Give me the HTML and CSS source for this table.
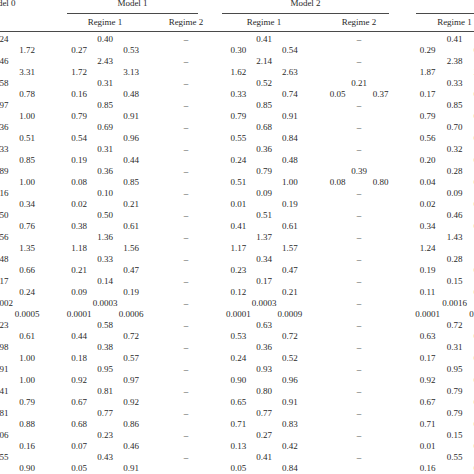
FILE: index.html
```html
<!DOCTYPE html>
<html>
<head>
<meta charset="utf-8">
<link rel="stylesheet" href="styles.css">
</head>
<body>
<div class="table">
  <div class="group g0">
    <div class="ghead nl">Model 0</div>
    <div class="regs">
      <div class="col c0">
        <div class="rhead">&nbsp;</div>
        <div class="body">
          <div class="cell"><span class="m">0.24</span><span class="r">1.72</span></div>
          <div class="cell"><span class="m">2.46</span><span class="r">3.31</span></div>
          <div class="cell"><span class="m">0.58</span><span class="r">0.78</span></div>
          <div class="cell"><span class="m">0.97</span><span class="r">1.00</span></div>
          <div class="cell"><span class="m">0.36</span><span class="r">0.51</span></div>
          <div class="cell"><span class="m">0.33</span><span class="r">0.85</span></div>
          <div class="cell"><span class="m">0.89</span><span class="r">1.00</span></div>
          <div class="cell"><span class="m">0.16</span><span class="r">0.34</span></div>
          <div class="cell"><span class="m">0.50</span><span class="r">0.76</span></div>
          <div class="cell"><span class="m">0.56</span><span class="r">1.35</span></div>
          <div class="cell"><span class="m">0.48</span><span class="r">0.66</span></div>
          <div class="cell"><span class="m">0.17</span><span class="r">0.24</span></div>
          <div class="cell"><span class="m">0.0002</span><span class="r">0.0005</span></div>
          <div class="cell"><span class="m">0.23</span><span class="r">0.61</span></div>
          <div class="cell"><span class="m">0.98</span><span class="r">1.00</span></div>
          <div class="cell"><span class="m">0.91</span><span class="r">1.00</span></div>
          <div class="cell"><span class="m">0.41</span><span class="r">0.79</span></div>
          <div class="cell"><span class="m">0.81</span><span class="r">0.88</span></div>
          <div class="cell"><span class="m">0.06</span><span class="r">0.16</span></div>
          <div class="cell"><span class="m">0.55</span><span class="r">0.90</span></div>
        </div>
      </div>
    </div>
  </div>

  <div class="group g1">
    <div class="ghead">Model 1</div>
    <div class="regs">
      <div class="col c1">
        <div class="rhead">Regime 1</div>
        <div class="body">
          <div class="cell"><span class="m">0.40</span><span class="l">0.27</span><span class="r">0.53</span></div>
          <div class="cell"><span class="m">2.43</span><span class="l">1.72</span><span class="r">3.13</span></div>
          <div class="cell"><span class="m">0.31</span><span class="l">0.16</span><span class="r">0.48</span></div>
          <div class="cell"><span class="m">0.85</span><span class="l">0.79</span><span class="r">0.91</span></div>
          <div class="cell"><span class="m">0.69</span><span class="l">0.54</span><span class="r">0.96</span></div>
          <div class="cell"><span class="m">0.31</span><span class="l">0.19</span><span class="r">0.44</span></div>
          <div class="cell"><span class="m">0.36</span><span class="l">0.08</span><span class="r">0.85</span></div>
          <div class="cell"><span class="m">0.10</span><span class="l">0.02</span><span class="r">0.21</span></div>
          <div class="cell"><span class="m">0.50</span><span class="l">0.38</span><span class="r">0.61</span></div>
          <div class="cell"><span class="m">1.36</span><span class="l">1.18</span><span class="r">1.56</span></div>
          <div class="cell"><span class="m">0.33</span><span class="l">0.21</span><span class="r">0.47</span></div>
          <div class="cell"><span class="m">0.14</span><span class="l">0.09</span><span class="r">0.19</span></div>
          <div class="cell"><span class="m">0.0003</span><span class="l">0.0001</span><span class="r">0.0006</span></div>
          <div class="cell"><span class="m">0.58</span><span class="l">0.44</span><span class="r">0.72</span></div>
          <div class="cell"><span class="m">0.38</span><span class="l">0.18</span><span class="r">0.57</span></div>
          <div class="cell"><span class="m">0.95</span><span class="l">0.92</span><span class="r">0.97</span></div>
          <div class="cell"><span class="m">0.81</span><span class="l">0.67</span><span class="r">0.92</span></div>
          <div class="cell"><span class="m">0.77</span><span class="l">0.68</span><span class="r">0.86</span></div>
          <div class="cell"><span class="m">0.23</span><span class="l">0.07</span><span class="r">0.46</span></div>
          <div class="cell"><span class="m">0.43</span><span class="l">0.05</span><span class="r">0.91</span></div>
        </div>
      </div>
      <div class="col c1b">
        <div class="rhead">Regime 2</div>
        <div class="body">
          <div class="cell"><span class="m">–</span></div>
          <div class="cell"><span class="m">–</span></div>
          <div class="cell"><span class="m">–</span></div>
          <div class="cell"><span class="m">–</span></div>
          <div class="cell"><span class="m">–</span></div>
          <div class="cell"><span class="m">–</span></div>
          <div class="cell"><span class="m">–</span></div>
          <div class="cell"><span class="m">–</span></div>
          <div class="cell"><span class="m">–</span></div>
          <div class="cell"><span class="m">–</span></div>
          <div class="cell"><span class="m">–</span></div>
          <div class="cell"><span class="m">–</span></div>
          <div class="cell"><span class="m">–</span></div>
          <div class="cell"><span class="m">–</span></div>
          <div class="cell"><span class="m">–</span></div>
          <div class="cell"><span class="m">–</span></div>
          <div class="cell"><span class="m">–</span></div>
          <div class="cell"><span class="m">–</span></div>
          <div class="cell"><span class="m">–</span></div>
          <div class="cell"><span class="m">–</span></div>
        </div>
      </div>
    </div>
  </div>

  <div class="group g2">
    <div class="ghead">Model 2</div>
    <div class="regs">
      <div class="col c2">
        <div class="rhead">Regime 1</div>
        <div class="body">
          <div class="cell"><span class="m">0.41</span><span class="l">0.30</span><span class="r">0.54</span></div>
          <div class="cell"><span class="m">2.14</span><span class="l">1.62</span><span class="r">2.63</span></div>
          <div class="cell"><span class="m">0.52</span><span class="l">0.33</span><span class="r">0.74</span></div>
          <div class="cell"><span class="m">0.85</span><span class="l">0.79</span><span class="r">0.91</span></div>
          <div class="cell"><span class="m">0.68</span><span class="l">0.55</span><span class="r">0.84</span></div>
          <div class="cell"><span class="m">0.36</span><span class="l">0.24</span><span class="r">0.48</span></div>
          <div class="cell"><span class="m">0.79</span><span class="l">0.51</span><span class="r">1.00</span></div>
          <div class="cell"><span class="m">0.09</span><span class="l">0.01</span><span class="r">0.19</span></div>
          <div class="cell"><span class="m">0.51</span><span class="l">0.41</span><span class="r">0.61</span></div>
          <div class="cell"><span class="m">1.37</span><span class="l">1.17</span><span class="r">1.57</span></div>
          <div class="cell"><span class="m">0.34</span><span class="l">0.23</span><span class="r">0.47</span></div>
          <div class="cell"><span class="m">0.17</span><span class="l">0.12</span><span class="r">0.21</span></div>
          <div class="cell"><span class="m">0.0003</span><span class="l">0.0001</span><span class="r">0.0009</span></div>
          <div class="cell"><span class="m">0.63</span><span class="l">0.53</span><span class="r">0.72</span></div>
          <div class="cell"><span class="m">0.36</span><span class="l">0.24</span><span class="r">0.52</span></div>
          <div class="cell"><span class="m">0.93</span><span class="l">0.90</span><span class="r">0.96</span></div>
          <div class="cell"><span class="m">0.80</span><span class="l">0.65</span><span class="r">0.91</span></div>
          <div class="cell"><span class="m">0.77</span><span class="l">0.71</span><span class="r">0.83</span></div>
          <div class="cell"><span class="m">0.27</span><span class="l">0.13</span><span class="r">0.42</span></div>
          <div class="cell"><span class="m">0.41</span><span class="l">0.05</span><span class="r">0.84</span></div>
        </div>
      </div>
      <div class="col c2b">
        <div class="rhead">Regime 2</div>
        <div class="body">
          <div class="cell"><span class="m">–</span></div>
          <div class="cell"><span class="m">–</span></div>
          <div class="cell"><span class="m">0.21</span><span class="l">0.05</span><span class="r">0.37</span></div>
          <div class="cell"><span class="m">–</span></div>
          <div class="cell"><span class="m">–</span></div>
          <div class="cell"><span class="m">–</span></div>
          <div class="cell"><span class="m">0.39</span><span class="l">0.08</span><span class="r">0.80</span></div>
          <div class="cell"><span class="m">–</span></div>
          <div class="cell"><span class="m">–</span></div>
          <div class="cell"><span class="m">–</span></div>
          <div class="cell"><span class="m">–</span></div>
          <div class="cell"><span class="m">–</span></div>
          <div class="cell"><span class="m">–</span></div>
          <div class="cell"><span class="m">–</span></div>
          <div class="cell"><span class="m">–</span></div>
          <div class="cell"><span class="m">–</span></div>
          <div class="cell"><span class="m">–</span></div>
          <div class="cell"><span class="m">–</span></div>
          <div class="cell"><span class="m">–</span></div>
          <div class="cell"><span class="m">–</span></div>
        </div>
      </div>
    </div>
  </div>

  <div class="group g3">
    <div class="ghead">Model 3</div>
    <div class="regs">
      <div class="col c3">
        <div class="rhead">Regime 1</div>
        <div class="body">
          <div class="cell"><span class="m">0.41</span><span class="l">0.29</span><span class="r">0.53</span></div>
          <div class="cell"><span class="m">2.38</span><span class="l">1.87</span><span class="r">2.89</span></div>
          <div class="cell"><span class="m">0.33</span><span class="l">0.17</span><span class="r">0.50</span></div>
          <div class="cell"><span class="m">0.85</span><span class="l">0.79</span><span class="r">0.91</span></div>
          <div class="cell"><span class="m">0.70</span><span class="l">0.56</span><span class="r">0.84</span></div>
          <div class="cell"><span class="m">0.32</span><span class="l">0.20</span><span class="r">0.45</span></div>
          <div class="cell"><span class="m">0.28</span><span class="l">0.04</span><span class="r">0.76</span></div>
          <div class="cell"><span class="m">0.09</span><span class="l">0.02</span><span class="r">0.17</span></div>
          <div class="cell"><span class="m">0.46</span><span class="l">0.34</span><span class="r">0.58</span></div>
          <div class="cell"><span class="m">1.43</span><span class="l">1.24</span><span class="r">1.63</span></div>
          <div class="cell"><span class="m">0.28</span><span class="l">0.19</span><span class="r">0.38</span></div>
          <div class="cell"><span class="m">0.15</span><span class="l">0.11</span><span class="r">0.19</span></div>
          <div class="cell"><span class="m">0.0016</span><span class="l">0.0001</span><span class="r">0.0040</span></div>
          <div class="cell"><span class="m">0.72</span><span class="l">0.63</span><span class="r">0.80</span></div>
          <div class="cell"><span class="m">0.31</span><span class="l">0.17</span><span class="r">0.46</span></div>
          <div class="cell"><span class="m">0.95</span><span class="l">0.92</span><span class="r">0.97</span></div>
          <div class="cell"><span class="m">0.79</span><span class="l">0.67</span><span class="r">0.89</span></div>
          <div class="cell"><span class="m">0.79</span><span class="l">0.71</span><span class="r">0.86</span></div>
          <div class="cell"><span class="m">0.15</span><span class="l">0.01</span><span class="r">0.33</span></div>
          <div class="cell"><span class="m">0.55</span><span class="l">0.16</span><span class="r">0.91</span></div>
        </div>
      </div>
      <div class="col c3b">
        <div class="rhead">Regime 2</div>
        <div class="body"></div>
      </div>
    </div>
  </div>
</div>
</body>
</html>
```
FILE: styles.css
```css
html, body {
  margin: 0;
  padding: 0;
  background: #ffffff;
  overflow: hidden;
  width: 474px;
  height: 474px;
}

.table {
  display: flex;
  align-items: flex-start;
  margin-left: -52px;
  margin-top: -2px;
  font-family: "Liberation Serif", "Times New Roman", serif;
  font-size: 9px;
  line-height: 11px;
  color: #2a2a2a;
  white-space: nowrap;
  width: 700px;
}

.group {
  display: flex;
  flex-direction: column;
  flex: none;
}

.ghead {
  text-align: center;
  height: 11px;
  padding-bottom: 4px;
  border-bottom: 1px solid #4a4a4a;
}

.ghead.nl {
  border-bottom-color: transparent;
}

.g1 .ghead { margin: 0 17px 0 14px; }
.g2 .ghead { margin: 0 16px 0 7px; }
.g3 .ghead { margin: 0 0 0 11px; }

.regs {
  display: flex;
  margin-top: 3px;
}

.col {
  flex: none;
  display: flex;
  flex-direction: column;
}

.rhead {
  text-align: center;
  height: 11px;
  padding-bottom: 3px;
  border-bottom: 1px solid #4a4a4a;
}

.body {
  padding-top: 1.5px;
  display: flex;
  flex-direction: column;
}

.cell {
  display: grid;
  grid-template-columns: repeat(3, var(--t));
  grid-template-rows: 11px 11px;
  justify-content: center;
}

.cell span {
  justify-self: center;
  white-space: nowrap;
}

.cell .m { grid-column: 2; grid-row: 1; }
.cell .l { grid-column: 1; grid-row: 2; }
.cell .r { grid-column: 3; grid-row: 2; }

.c0  { width: 105px; --t: 26.5px; }
.c1  { width: 104px; --t: 26px; }
.c1b { width: 58px;  --t: 18px; }
.c2  { width: 98px;  --t: 25.75px; }
.c2b { width: 92px;  --t: 21.5px; }
.c3  { width: 99px;  --t: 27px; }
.c3b { width: 90px;  --t: 22px; }
```
